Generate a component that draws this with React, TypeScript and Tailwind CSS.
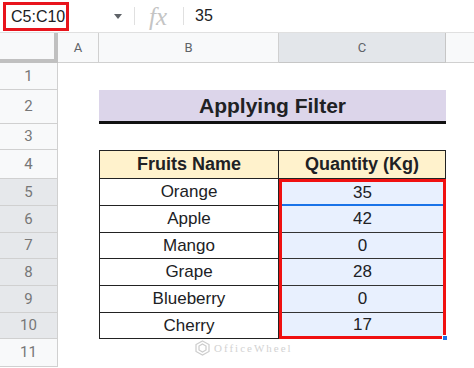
import React from 'react'

const rowHeights = [27, 34, 26, 29, 27, 27, 26, 27, 27, 26, 28]
const fruits = [
  { name: 'Orange', qty: 35 },
  { name: 'Apple', qty: 42 },
  { name: 'Mango', qty: 0 },
  { name: 'Grape', qty: 28 },
  { name: 'Blueberry', qty: 0 },
  { name: 'Cherry', qty: 17 },
]
// inner heights of the C cells once the red 3px frame is taken out
const qtyHeights = [24, 27, 26, 27, 27, 23]
const rowStart = ['row-start-5', 'row-start-6', 'row-start-7', 'row-start-8', 'row-start-9', 'row-start-10']

export default function App() {
  return (
    <div className="relative w-[474px] h-[368px] overflow-hidden bg-white font-['Liberation_Sans',Arial,sans-serif] text-[#202124]">
      {/* formula bar */}
      <div className="flex items-center h-[33px] border-b border-[#e0e0e0]">
        <div className="ml-[3px] mt-px flex items-center w-[66px] h-[29px] border-[3px] border-[#e8141c] pl-[5px] text-[16px] leading-none">
          C5:C10
        </div>
        <div className="ml-[45px] w-0 h-0 border-x-[4px] border-x-transparent border-t-[5px] border-t-[#5f6368]" />
        <div className="ml-[12px] w-px h-[18px] bg-[#e0e0e0]" />
        <div className="ml-[14px] font-['Liberation_Serif',serif] italic text-[25px] leading-none text-[#c4c4c4]">fx</div>
        <div className="ml-[16px] w-px h-[18px] bg-[#e0e0e0]" />
        <div className="ml-[11px] text-[16px] leading-none">35</div>
      </div>

      {/* column headers */}
      <div className="grid grid-cols-[58px_41px_180px_167px_1fr] h-[30px] text-[13px] text-[#5f6368] font-['Roboto',sans-serif]">
        <div className="bg-[#f8f9fa] border-r-[4px] border-b-[4px] border-[#c0c0c0]" />
        <div className="flex items-center justify-center bg-[#f8f9fa] border-r border-b border-[#d0d0d0]">A</div>
        <div className="flex items-center justify-center bg-[#f8f9fa] border-r border-b border-[#d0d0d0]">B</div>
        <div className="flex items-center justify-center bg-[#e3e6ea] border-r border-b border-[#c6c6c6]">C</div>
        <div className="bg-[#f8f9fa] border-b border-[#d0d0d0]" />
      </div>

      {/* sheet body */}
      <div className="grid grid-cols-[58px_41px_180px_167px_1fr] grid-rows-[27px_34px_26px_29px_27px_27px_26px_27px_27px_26px_28px]">
        {rowHeights.map((_, i) => (
          <div
            key={i}
            className={`col-start-1 flex items-center justify-center border-r border-b border-[#d0d0d0] text-[15px] text-[#777] font-['Roboto',sans-serif] ${
              i >= 4 && i <= 9 ? 'bg-[#e6e8eb]' : 'bg-[#f8f9fa]'
            }`}
            style={{ gridRowStart: i + 1 }}
          >
            {i + 1}
          </div>
        ))}

        {/* title */}
        <div className="col-start-3 col-span-2 row-start-2 flex items-center justify-center bg-[#dcd5ea] border-b-[3px] border-[#111] text-[21px] font-bold">
          Applying Filter
        </div>

        {/* table header */}
        <div className="col-start-3 row-start-4 flex items-center justify-center bg-[#fff2cc] border border-[#222] text-[18px] font-bold">
          Fruits Name
        </div>
        <div className="col-start-4 row-start-4 flex items-center justify-center bg-[#fff2cc] border-y border-r border-[#222] text-[18px] font-bold">
          Quantity (Kg)
        </div>

        {fruits.map((f, i) => (
          <div
            key={f.name}
            className={`col-start-3 ${rowStart[i]} flex items-center justify-center border-x border-b border-[#222] text-[17px]`}
          >
            {f.name}
          </div>
        ))}

        {/* selected range C5:C10 */}
        <div className="relative col-start-4 row-start-5 row-span-6 flex flex-col border-[3px] border-[#f01010] bg-[#e8f0fe]">
          {fruits.map((f, i) => (
            <div
              key={f.name}
              className={`flex items-center justify-center text-[17px] ${
                i === 0 ? 'border-b-2 border-[#1a73e8]' : i < 5 ? 'border-b border-[#333]' : ''
              }`}
              style={{ height: qtyHeights[i] }}
            >
              {f.qty}
            </div>
          ))}
          <div className="absolute -right-[5px] -bottom-[5px] w-[6px] h-[6px] bg-[#1a73e8] border border-white" />
        </div>
      </div>

      {/* watermark */}
      <div className="absolute left-[195px] top-[340px] flex items-center gap-[4px] text-[#c8c8c8] opacity-80">
        <svg width="15" height="16" viewBox="0 0 15 16" fill="none" stroke="#c0c0c0" strokeWidth="1.2">
          <path d="M7.5 1 L14 4.5 L14 11.5 L7.5 15 L1 11.5 L1 4.5 Z" />
          <path d="M7.5 4 L11 6 L11 10 L7.5 12 L4 10 L4 6 Z" />
        </svg>
        <span className="font-['Liberation_Serif',serif] text-[11px] tracking-[2px]">OfficeWheel</span>
      </div>
    </div>
  )
}
